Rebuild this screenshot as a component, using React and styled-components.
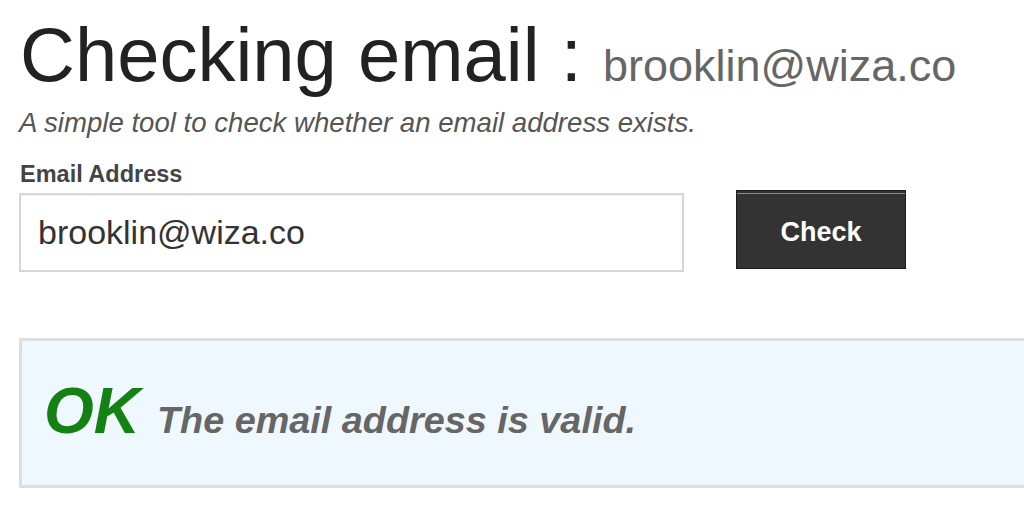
import React from "react";
import styled, { createGlobalStyle } from "styled-components";

const GlobalStyle = createGlobalStyle`
  html, body {
    margin: 0;
    padding: 0;
    background: #fff;
    overflow-x: hidden;
  }
  body {
    font-family: "Liberation Sans", Arial, Helvetica, sans-serif;
  }
`;

const Page = styled.main`
  padding: 17px 0 0 20px;
`;

const Title = styled.h1`
  margin: 0;
  font-size: 76px;
  line-height: 76px;
  font-weight: 400;
  color: #222;
  white-space: nowrap;
`;

const TitleEmail = styled.span`
  font-size: 45px;
  line-height: 1;
  color: #666;
`;

const Tagline = styled.p`
  margin: 14px 0 0 -1px;
  font-size: 27.6px;
  line-height: 32px;
  font-style: italic;
  color: #555;
`;

const Label = styled.label`
  display: block;
  margin-top: 22px;
  font-size: 23.5px;
  line-height: 26px;
  font-weight: 700;
  color: #444;
`;

const FormRow = styled.form`
  display: flex;
  align-items: flex-start;
  gap: 52px;
  margin-top: 3px;
`;

const EmailInput = styled.input`
  box-sizing: border-box;
  width: 665px;
  height: 79px;
  margin: 3px 0 0 -1px;
  padding: 0 17px;
  border: 2px solid #d6d6d6;
  box-shadow: inset 0 1px 2px rgba(0, 0, 0, 0.06);
  font-family: inherit;
  font-size: 34px;
  color: #333;
  outline: none;
`;

const CheckButton = styled.button`
  box-sizing: border-box;
  width: 170px;
  height: 79px;
  padding-top: 7px;
  background: #333;
  border: 1px solid #1c1c1c;
  box-shadow: inset 0 2px 0 #333, inset 0 3px 0 #8a8a8a;
  color: #fff;
  font-family: inherit;
  font-size: 27px;
  font-weight: 700;
  cursor: pointer;
`;

const ResultBox = styled.section`
  box-sizing: border-box;
  width: 1100px;
  margin: 66px 0 0 -1px;
  padding: 38px 22px 42px;
  background: #f0f8ff;
  border: 3px solid #dedede;
  white-space: nowrap;
`;

const Status = styled.span`
  font-size: 64px;
  line-height: 64px;
  font-weight: 700;
  font-style: italic;
  color: ${(p) => p.$color};
`;

const Message = styled.span`
  margin-left: 17px;
  font-size: 37.8px;
  font-weight: 700;
  font-style: italic;
  color: #666;
`;

export default function App() {
  const email = "brooklin@wiza.co";

  return (
    <>
      <GlobalStyle />
      <Page>
        <Title>
          Checking email : <TitleEmail>{email}</TitleEmail>
        </Title>
        <Tagline>A simple tool to check whether an email address exists.</Tagline>
        <Label htmlFor="email">Email Address</Label>
        <FormRow onSubmit={(e) => e.preventDefault()}>
          <EmailInput id="email" type="text" defaultValue={email} />
          <CheckButton type="submit">Check</CheckButton>
        </FormRow>
        <ResultBox>
          <Status $color="#138213">OK</Status>
          <Message>The email address is valid.</Message>
        </ResultBox>
      </Page>
    </>
  );
}
